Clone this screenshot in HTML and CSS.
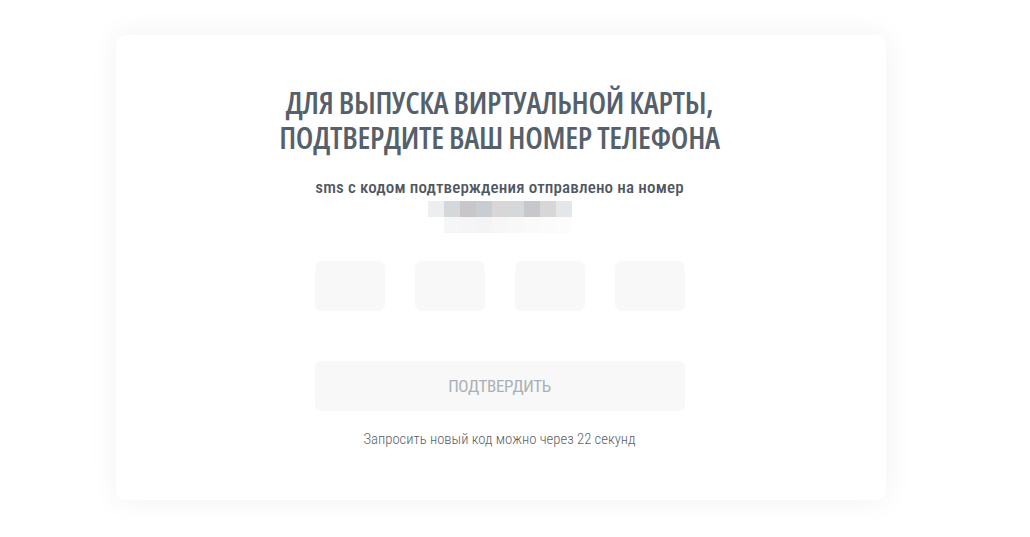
FILE: index.html
```html
<!DOCTYPE html>
<html lang="ru">
<head>
<meta charset="utf-8">
<link rel="stylesheet" href="styles.css">
</head>
<body>
<div class="page">
  <div class="card">
    <h1 class="title">ДЛЯ ВЫПУСКА ВИРТУАЛЬНОЙ КАРТЫ,<br>ПОДТВЕРДИТЕ ВАШ НОМЕР ТЕЛЕФОНА</h1>
    <p class="subtitle">sms с кодом подтверждения отправлено на номер</p>
    <div class="phone">
      <div class="blur-row">
        <span style="background:#eceef0"></span><span style="background:#d5d8da"></span><span style="background:#c8c6c8"></span><span style="background:#c9ccd1"></span><span style="background:#d8d6d7"></span><span style="background:#d5d8db"></span><span style="background:#c6c8cb"></span><span style="background:#d8d7d8"></span><span style="background:#e4e7ea"></span>
      </div>
      <div class="blur-row">
        <span style="background:#f6f6f8"></span><span style="background:#f5f5f7"></span><span style="background:#f4f4f6"></span><span style="background:#f9f6f7"></span><span style="background:#f9f8f9"></span><span style="background:#fafafb"></span><span style="background:#fbfbfb"></span><span style="background:#fcfcfc"></span>
      </div>
    </div>
    <div class="code">
      <input class="digit" type="text" maxlength="1">
      <input class="digit" type="text" maxlength="1">
      <input class="digit" type="text" maxlength="1">
      <input class="digit" type="text" maxlength="1">
    </div>
    <button class="confirm" disabled>ПОДТВЕРДИТЬ</button>
    <p class="resend">Запросить новый код можно через 22 секунд</p>
  </div>
</div>
</body>
</html>
```
FILE: styles.css
```css
html, body {
  margin: 0;
  padding: 0;
  background: #ffffff;
}
body {
  font-family: "Roboto Condensed", "Roboto", sans-serif;
}
.page {
  width: 1030px;
  height: 537px;
  padding-top: 35px;
  box-sizing: border-box;
  display: flex;
  justify-content: center;
}
.card {
  width: 770px;
  height: 465px;
  margin-left: -29px;
  background: #fff;
  border-radius: 10px;
  box-shadow: 0 0 30px rgba(0, 0, 0, 0.06);
  display: flex;
  flex-direction: column;
  align-items: center;
  box-sizing: border-box;
  padding-top: 50px;
  padding-right: 2px;
}
.title {
  margin: 0;
  font-family: "Open Sans", sans-serif;
  font-stretch: 75%;
  font-size: 31px;
  line-height: 35px;
  font-weight: 600;
  letter-spacing: -0.3px;
  color: #56606b;
  text-align: center;
}
.subtitle {
  margin: 22px 0 0;
  font-size: 17px;
  line-height: 20px;
  font-weight: 500;
  letter-spacing: 0.15px;
  color: #4f5761;
}
.phone {
  margin-top: 4px;
  width: 144px;
  height: 32px;
  display: flex;
  flex-direction: column;
  align-items: flex-end;
}
.blur-row {
  display: flex;
  height: 16px;
}
.blur-row span {
  width: 16px;
  height: 16px;
}
.code {
  margin-top: 28px;
  display: flex;
  gap: 30px;
}
.digit {
  width: 70px;
  height: 50px;
  box-sizing: border-box;
  border: none;
  border-radius: 7px;
  background: #f8f8f8;
  outline: none;
  padding: 0;
}
.confirm {
  margin-top: 50px;
  width: 370px;
  height: 50px;
  border: none;
  border-radius: 6px;
  background: #f8f8f8;
  color: #aab0b7;
  font-family: inherit;
  font-size: 17px;
  font-weight: 400;
  letter-spacing: -0.35px;
  padding: 0;
}
.resend {
  margin: 19px 0 0;
  font-size: 14.7px;
  line-height: 18px;
  color: #5a5f66;
  font-weight: 300;
}
```
